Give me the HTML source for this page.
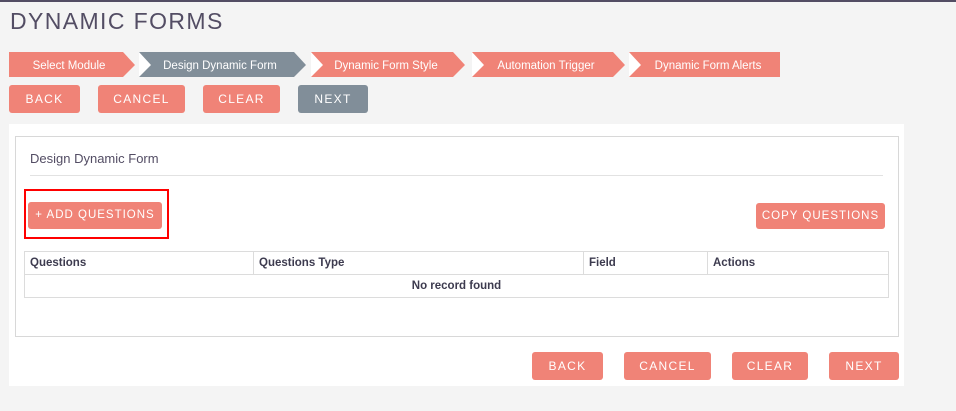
<!DOCTYPE html>
<html><head><meta charset="utf-8"><style>
body{margin:0;width:956px;height:411px;background:#f4f4f4;font-family:"Liberation Sans",sans-serif;position:relative;overflow:hidden}
.a{position:absolute}
.top{left:0;top:0;width:956px;height:2px;background:#534d64}
h1{position:absolute;left:10px;top:8px;margin:0;font-weight:normal;font-size:23px;letter-spacing:1.4px;color:#534d64}
.btn{position:absolute;height:28px;line-height:28px;text-align:center;color:#fff;background:#f08377;border-radius:3px;font-size:12px;letter-spacing:1.3px}
.sm{letter-spacing:1px}
.g{background:#818e99}
.st{fill:#fff;font-size:11.5px;font-family:"Liberation Sans",sans-serif}
table{border-collapse:collapse;font-size:11.5px;color:#3d3b4f;font-weight:bold}
td{border:1px solid #dcdcdc;height:22px;padding:0 0 0 5px}
</style></head><body>
<div class="a top"></div>
<h1>DYNAMIC FORMS</h1>
<svg class="a" style="left:0;top:52px" width="800" height="26">
<polygon points="9,0 123,0 135,13 123,25 9,25" fill="#f08377"/>
<polygon points="139,0 294,0 306,13 294,25 139,25" fill="#818e99"/>
<polygon points="139,0 151,13 139,25" fill="#fff"/>
<polygon points="311,0 453,0 465,13 453,25 311,25" fill="#f08377"/>
<polygon points="311,0 323,13 311,25" fill="#fff"/>
<polygon points="472,0 613,0 625,13 613,25 472,25" fill="#f08377"/>
<polygon points="472,0 484,13 472,25" fill="#fff"/>
<polygon points="629,0 780,0 780,25 629,25" fill="#f08377"/>
<polygon points="629,0 641,13 629,25" fill="#fff"/>
<text class="st" x="69" y="17" text-anchor="middle">Select Module</text>
<text class="st" x="220" y="17" text-anchor="middle">Design Dynamic Form</text>
<text class="st" x="386" y="17" text-anchor="middle">Dynamic Form Style</text>
<text class="st" x="546" y="17" text-anchor="middle">Automation Trigger</text>
<text class="st" x="708" y="17" text-anchor="middle">Dynamic Form Alerts</text>
</svg>
<div class="btn" style="left:9px;top:85px;width:71px">BACK</div>
<div class="btn" style="left:98px;top:85px;width:87px">CANCEL</div>
<div class="btn" style="left:203px;top:85px;width:77px">CLEAR</div>
<div class="btn g" style="left:298px;top:85px;width:70px">NEXT</div>
<div class="a" style="left:9px;top:124px;width:895px;height:262px;background:#fff"></div>
<div class="a" style="left:15px;top:136px;width:882px;height:199px;border:1px solid #d8d8d8"></div>
<div class="a" style="left:30px;top:151px;font-size:13px;color:#534d64">Design Dynamic Form</div>
<div class="a" style="left:30px;top:175px;width:853px;height:1px;background:#e2e2e2"></div>
<div class="a" style="left:24px;top:189px;width:141px;height:46px;border:2px solid #f00"></div>
<div class="btn sm" style="left:28px;top:202px;width:134px;height:27px;line-height:27px;font-size:11.5px">+ ADD QUESTIONS</div>
<div class="btn sm" style="left:756px;top:203px;width:129px;height:26px;line-height:26px;font-size:11.5px">COPY QUESTIONS</div>
<table class="a" style="left:24px;top:251px;width:865px">
<tr><td style="width:223px">Questions</td><td style="width:324px">Questions Type</td><td style="width:118px">Field</td><td>Actions</td></tr>
<tr><td colspan="4" style="text-align:center;padding:0">No record found</td></tr>
</table>
<div class="btn" style="left:532px;top:352px;width:71px">BACK</div>
<div class="btn" style="left:624px;top:352px;width:87px">CANCEL</div>
<div class="btn" style="left:732px;top:352px;width:76px">CLEAR</div>
<div class="btn" style="left:829px;top:352px;width:70px">NEXT</div>
</body></html>
